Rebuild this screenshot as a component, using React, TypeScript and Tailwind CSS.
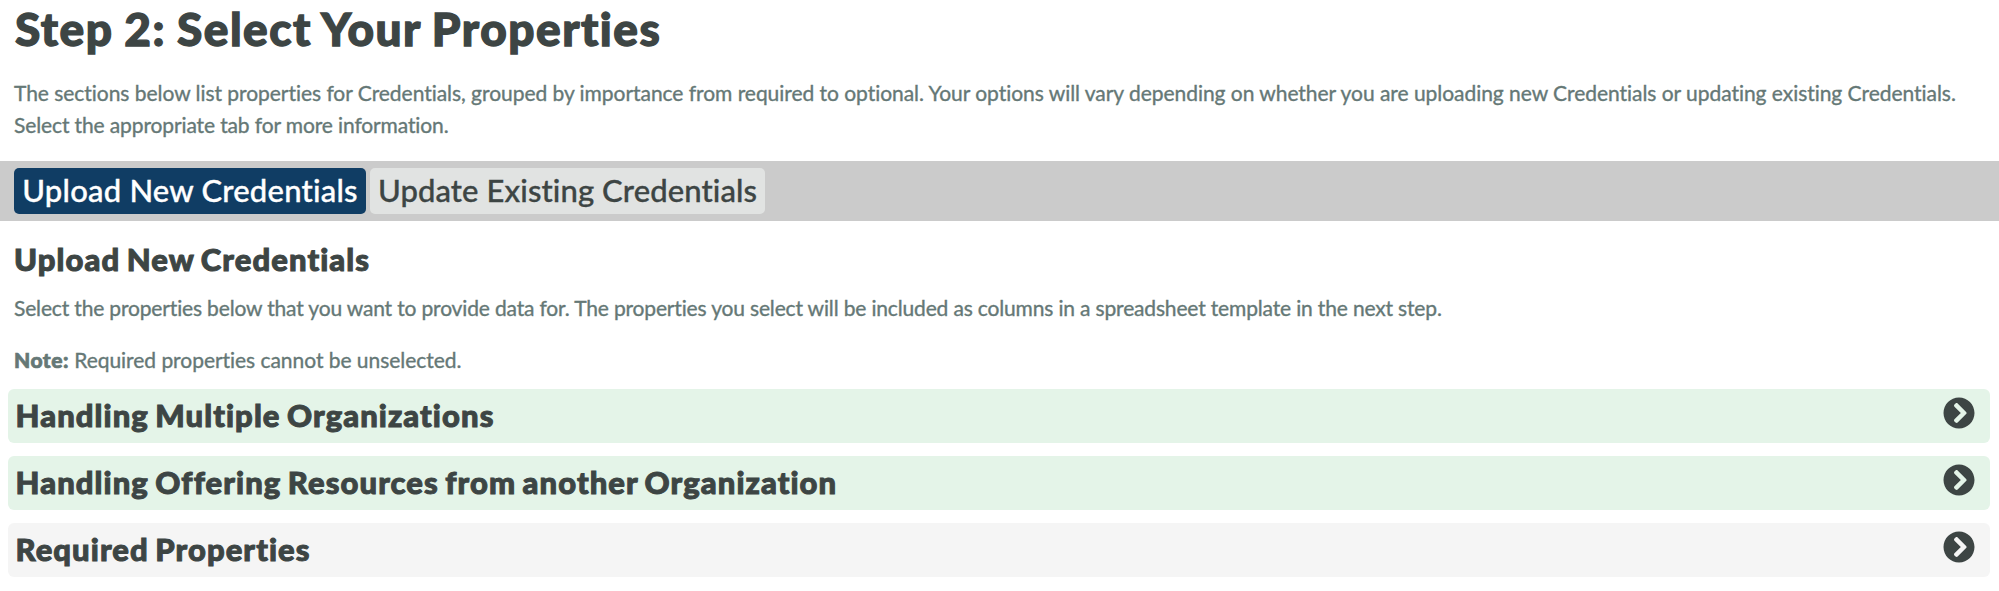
import { useState } from "react";
import { FaChevronCircleRight } from "react-icons/fa";
import { clsx } from "clsx";

const tabs = [
  { title: "Upload New Credentials", className: "w-[352px] tracking-[0.22px]" },
  { title: "Update Existing Credentials", className: "w-[395px] tracking-[0.1px]" },
];

const sections = [
  { title: "Handling Multiple Organizations", className: "bg-[#e4f4e8]" },
  { title: "Handling Offering Resources from another Organization", className: "bg-[#e4f4e8]" },
  { title: "Required Properties", className: "bg-[#f5f5f5]" },
];

export default function App() {
  const [active, setActive] = useState(0);

  return (
    <main className="h-[591px] w-[1999px] overflow-hidden bg-white font-['Lato',sans-serif] text-[21px] leading-8 text-[#657876] [font-variant-ligatures:none] [-webkit-text-stroke-width:0.35px]">
      <h1 className="px-[15px] pt-px text-[46px] leading-[56px] font-black tracking-[1.5px] text-[#3d4544] [word-spacing:-1.5px] [-webkit-text-stroke-width:1.3px]">
        Step 2: Select Your Properties
      </h1>
      <p className="px-[14px] pt-5 tracking-[-0.04px]">
        <span className="block whitespace-nowrap">
          The sections below list properties for Credentials, grouped by importance from required to optional. Your options will vary depending on whether you are uploading new Credentials or updating existing Credentials.
        </span>
        <span className="block tracking-[-0.12px]">Select the appropriate tab for more information.</span>
      </p>

      <div className="mt-5 flex h-[60px] items-center gap-1 bg-[#cbcbcb] px-[14px]">
        {tabs.map((tab, i) => (
          <button
            key={tab.title}
            onClick={() => setActive(i)}
            className={clsx(
              "flex h-[46px] justify-center rounded-[5px] text-[31px] leading-[45px] font-medium whitespace-nowrap",
              tab.className,
              active === i ? "bg-[#103d64] text-white" : "bg-[#e1e3e2] text-[#3d4544]"
            )}
          >
            {tab.title}
          </button>
        ))}
      </div>

      <h2 className="mt-[18px] px-[14px] text-[31px] leading-10 font-black tracking-[1.1px] text-[#3d4544] [word-spacing:-2px] [-webkit-text-stroke-width:1px]">
        Upload New Credentials
      </h2>
      <p className="mt-[13px] px-[14px] tracking-[-0.16px]">
        Select the properties below that you want to provide data for. The properties you select will be included as columns in a spreadsheet template in the next step.
      </p>
      <p className="mt-5 px-[14px] tracking-[-0.04px]">
        <b className="font-black tracking-[0.5px] [-webkit-text-stroke-width:0.7px]">Note:</b> Required properties cannot be unselected.
      </p>

      <div className="mt-[13px] flex flex-col gap-[13px] pr-[9px] pl-[7.5px]">
        {sections.map((section) => (
          <button
            key={section.title}
            className={clsx("flex h-[54px] items-start justify-between rounded-[6px] pr-[15px] pl-2 text-[#3d4544]", section.className)}
          >
            <span className="text-[31px] leading-[53px] font-black tracking-[1.08px] [word-spacing:-2px] [-webkit-text-stroke-width:1px]">
              {section.title}
            </span>
            <FaChevronCircleRight className="mt-2 size-8" />
          </button>
        ))}
      </div>
    </main>
  );
}
